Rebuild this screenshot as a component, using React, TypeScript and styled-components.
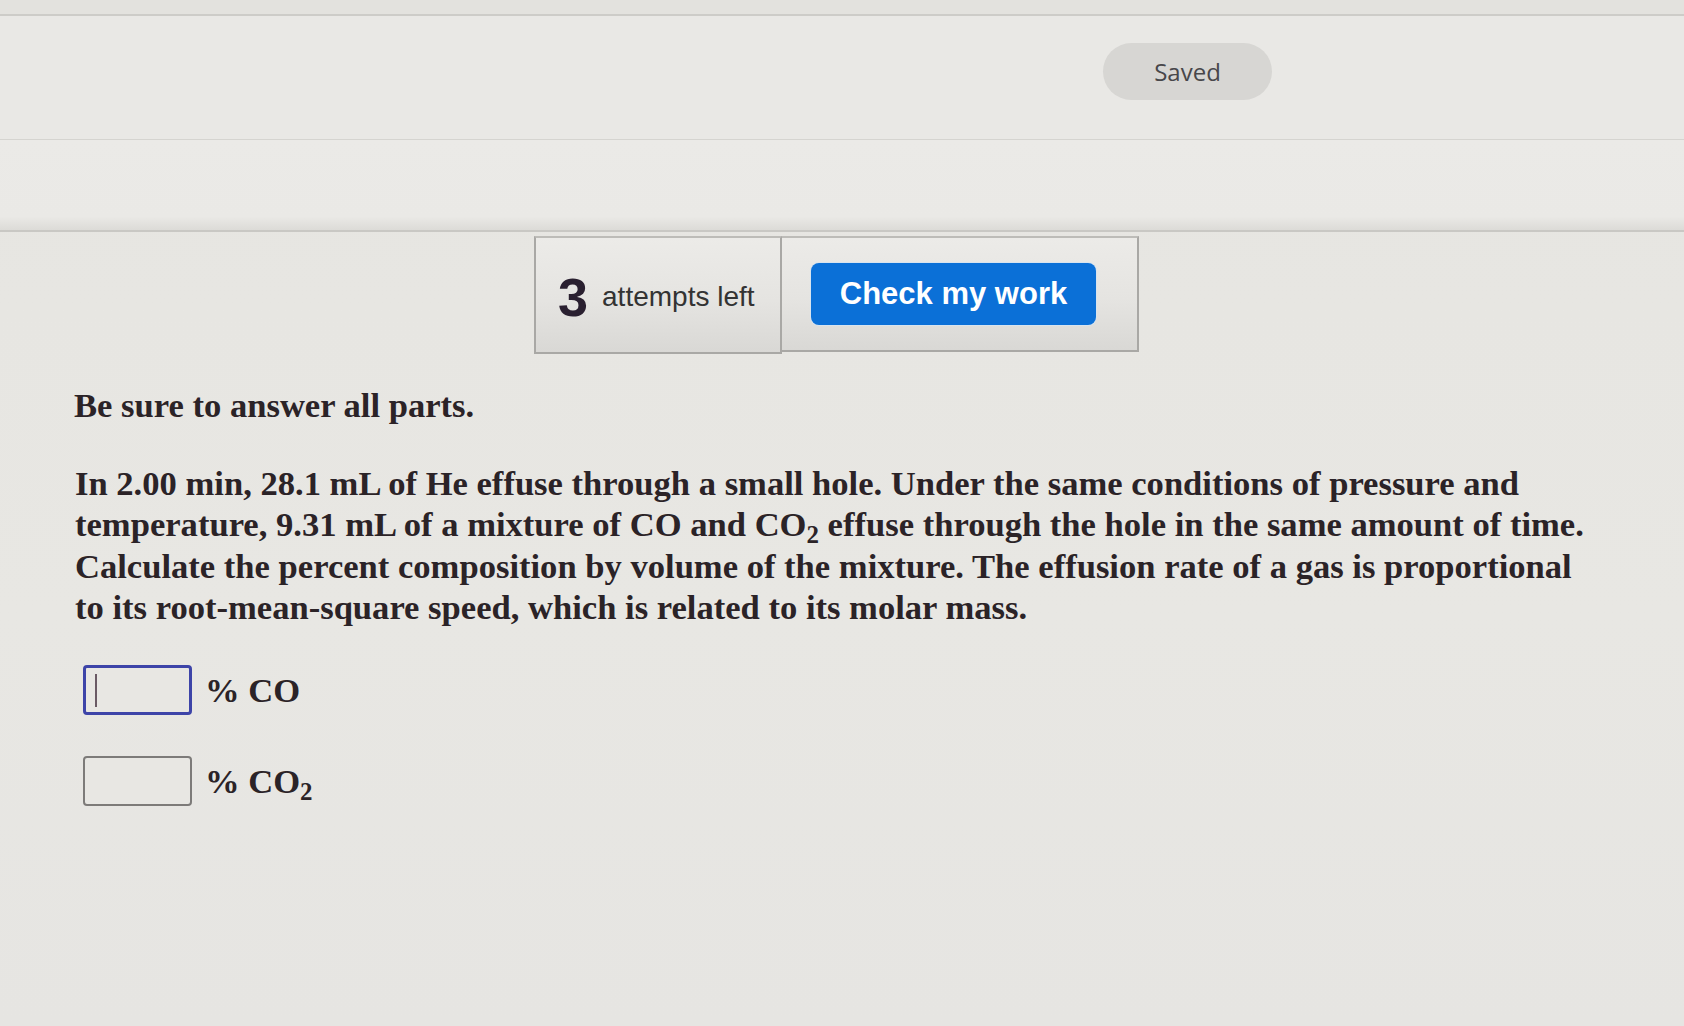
import { createGlobalStyle, styled } from "styled-components";

const GlobalStyle = createGlobalStyle`
    html, body {
        margin: 0;
        padding: 0;
    }
    body {
        background: #e4e3df;
        width: 1684px;
        height: 1026px;
        overflow: hidden;
    }
`

const Page = styled.div`
    display: flex;
    flex-direction: column;
    min-height: 1026px;
    background: linear-gradient(180deg, #e6e5e1 0%, #e8e7e3 60%, #e6e5e2 100%);
`

const TopStrip = styled.div`
    height: 14px;
    background: #e3e2de;
    border-bottom: 2px solid #cdccc8;
`

const Header = styled.div`
    height: 124px;
    display: flex;
    justify-content: flex-end;
    align-items: flex-start;
    padding: 27px 412px 0 0;
    box-sizing: border-box;
    background: #e9e8e5;
    border-bottom: 1px solid #d5d4d0;
`

const SavedPill = styled.div`
    width: 169px;
    height: 57px;
    border-radius: 29px;
    background: #d7d6d3;
    color: #48474a;
    font-family: "Open Sans", "DejaVu Sans", sans-serif;
    font-size: 24px;
    display: flex;
    align-items: center;
    justify-content: center;
`

const SubHeader = styled.div`
    height: 90px;
    background: linear-gradient(180deg, #ebeae7 0%, #eae9e6 85%, #dcdbd7 100%);
    border-bottom: 2px solid #c9c8c4;
`

const Toolbar = styled.div`
    display: flex;
    padding-left: 534px;
    margin-top: 4px;
`

const ToolCell = styled.div<{ width: number }>`
    width: ${props => props.width}px;
    height: 118px;
    box-sizing: border-box;
    border: 2px solid #a9a8a5;
    border-top-color: #bdbcb8;
    background: linear-gradient(180deg, #ecebe8 0%, #e5e4e1 55%, #d9d8d5 100%);
    display: flex;
    align-items: center;

    & + & {
        border-left: none;
    }
`

const AttemptsCell = styled(ToolCell)`
    padding-left: 22px;
    gap: 14px;
    padding-top: 4px;
`

const CheckCell = styled(ToolCell)`
    padding-left: 29px;
    height: 116px;
`

const BigNumber = styled.span`
    font-family: "Liberation Sans", Arial, sans-serif;
    font-weight: 700;
    font-size: 54px;
    color: #2a2030;
    line-height: 1;
`

const AttemptsText = styled.span`
    font-family: "Liberation Sans", Arial, sans-serif;
    font-size: 28px;
    color: #333;
`

const CheckButton = styled.button`
    width: 285px;
    height: 62px;
    border: none;
    border-radius: 8px;
    background: #0b70d7;
    color: #fff;
    font-family: "Liberation Sans", Arial, sans-serif;
    font-weight: 700;
    font-size: 31px;
    cursor: pointer;
    box-shadow: 0 0 0 1px #d8e4ef;
`

const Content = styled.div`
    padding: 31px 0 0 74px;
    font-family: "Liberation Serif", "Times New Roman", serif;
    font-weight: 700;
    font-size: 34.6px;
    line-height: 41.6px;
    color: #2b2327;

    sub {
        font-size: 0.72em;
        line-height: 0;
        vertical-align: -0.28em;
    }
`

const Instruction = styled.div`
    margin-bottom: 36px;
`

const Question = styled.p`
    margin: 0 0 36px 1px;
`

const AnswerRow = styled.div`
    display: flex;
    align-items: center;
    gap: 13px;
    margin-left: 9px;
    margin-bottom: 41px;
`

const AnswerBox = styled.div<{ focused?: boolean }>`
    width: 109px;
    height: 50px;
    box-sizing: border-box;
    border-radius: 4px;
    border: ${props => props.focused ? "3px solid #3d44a8" : "2px solid #7d7b79"};
    background: #e8e7e3;
    position: relative;
`

const Caret = styled.span`
    position: absolute;
    left: 9px;
    top: 6px;
    width: 2px;
    height: 33px;
    background: #6a5a64;
`

const Unit = styled.span`
    line-height: 50px;
`

export default function App() {
    return (
        <>
            <GlobalStyle />
            <Page>
                <TopStrip />
                <Header>
                    <SavedPill>Saved</SavedPill>
                </Header>
                <SubHeader />
                <Toolbar>
                    <AttemptsCell width={248}>
                        <BigNumber>3</BigNumber>
                        <AttemptsText>attempts left</AttemptsText>
                    </AttemptsCell>
                    <CheckCell width={357}>
                        <CheckButton>Check my work</CheckButton>
                    </CheckCell>
                </Toolbar>
                <Content>
                    <Instruction>Be sure to answer all parts.</Instruction>
                    <Question>
                        In 2.00 min, 28.1 mL of He effuse through a small hole. Under the same conditions of pressure and<br />
                        temperature, 9.31 mL of a mixture of CO and CO<sub>2</sub> effuse through the hole in the same amount of time.<br />
                        Calculate the percent composition by volume of the mixture. The effusion rate of a gas is proportional<br />
                        to its root-mean-square speed, which is related to its molar mass.
                    </Question>
                    <AnswerRow>
                        <AnswerBox focused>
                            <Caret />
                        </AnswerBox>
                        <Unit>% CO</Unit>
                    </AnswerRow>
                    <AnswerRow>
                        <AnswerBox />
                        <Unit>% CO<sub>2</sub></Unit>
                    </AnswerRow>
                </Content>
            </Page>
        </>
    )
}
